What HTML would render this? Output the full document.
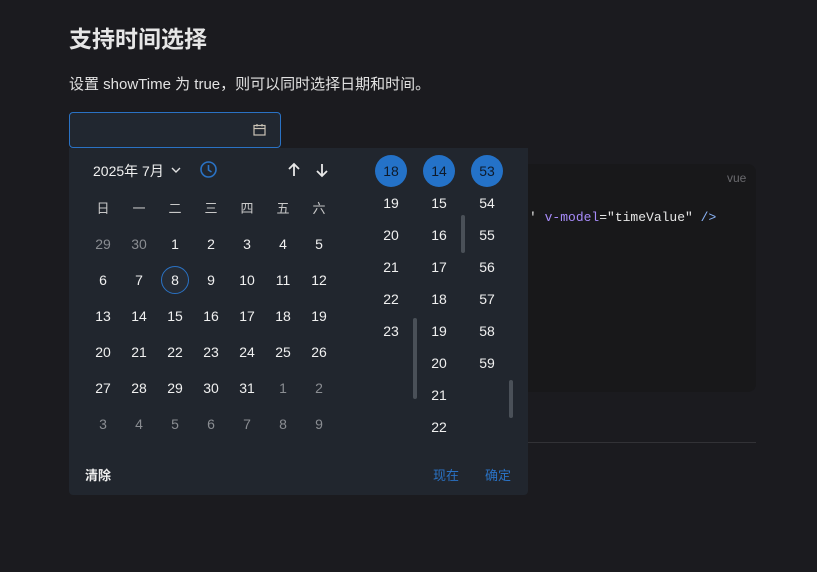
<!DOCTYPE html>
<html><head><meta charset="utf-8"><style>
*{margin:0;padding:0;box-sizing:border-box}
body{width:817px;height:572px;background:#1b1b1f;position:relative;overflow:hidden;font-family:"Liberation Sans","Noto Sans CJK SC",sans-serif;color:#e8e8e8}
.a{position:absolute}
.c{position:absolute;width:30px;height:30px;line-height:30px;text-align:center;font-size:14px;color:#f0f0f0}
.g{color:#8a8d92}
.w{color:#c8c8c8;font-size:13px}
.t{position:absolute;width:32px;height:32px;line-height:32px;text-align:center;font-size:14px;color:#f0f0f0}
.sel{background:#2472c8;border-radius:50%;color:#0e1a2a}
.bar{position:absolute;width:4px;background:#4a5058;border-radius:2px}
</style></head><body>
<div class="a" style="left:69px;top:20px;font-size:23px;font-weight:bold;color:#e6e6e6">支持时间选择</div>
<div class="a" style="left:69px;top:73px;font-size:15px;color:#e2e2e2">设置 showTime 为 true，则可以同时选择日期和时间。</div>
<div class="a" style="left:69px;top:112px;width:212px;height:36px;border:1px solid #2a72c4;border-radius:4px;background:#212730"></div>
<svg class="a" style="left:253px;top:123px" width="13" height="13" viewBox="0 0 13 13" fill="none" stroke="#c9c2b5" stroke-width="1.2"><rect x="1" y="2.5" width="11" height="9.5"/><line x1="1" y1="5.5" x2="12" y2="5.5"/><line x1="4" y1="1" x2="4" y2="3.5"/><line x1="9" y1="1" x2="9" y2="3.5"/></svg>

<div class="a" style="left:528px;top:164px;width:228px;height:228px;background:#18181a;border-radius:0 8px 8px 0"></div>
<div class="a" style="left:727px;top:171px;font-size:12px;color:#6a6a6e">vue</div>
<div class="a" style="left:529px;top:210px;font-family:'Liberation Mono','DejaVu Sans Mono',monospace;font-size:13px;color:#e6e6e6;white-space:pre">' <span style="color:#a78bfa">v-model</span>="timeValue" <span style="color:#8ab4f8">/&gt;</span></div>
<div class="a" style="left:528px;top:442px;width:228px;height:1px;background:#323236"></div>

<div class="a" style="left:69px;top:148px;width:459px;height:347px;background:#21262e;border-radius:0 0 4px 4px"></div>
<div class="a" style="left:93px;top:161px;font-size:14px;color:#f0f0f0">2025年 7月</div>
<svg class="a" style="left:170px;top:164px" width="12" height="12" viewBox="0 0 12 12" fill="none" stroke="#e0e0e0" stroke-width="1.4"><path d="M2 4l4 4 4-4"/></svg>
<svg class="a" style="left:199px;top:160px" width="19" height="19" viewBox="0 0 19 19" fill="none" stroke="#2a72c4" stroke-width="1.6"><circle cx="9.5" cy="9.5" r="7.5"/><path d="M9.5 5v5l3 2"/></svg>
<svg class="a" style="left:286px;top:162px" width="16" height="16" viewBox="0 0 16 16" fill="none" stroke="#e8e8e8" stroke-width="1.8"><path d="M8 14V2M3 7l5-5 5 5"/></svg>
<svg class="a" style="left:314px;top:162px" width="16" height="16" viewBox="0 0 16 16" fill="none" stroke="#e8e8e8" stroke-width="1.8"><path d="M8 2v12M3 9l5 5 5-5"/></svg>

<div class="c w" style="left:88px;top:194px">日</div><div class="c w" style="left:124px;top:194px">一</div><div class="c w" style="left:160px;top:194px">二</div><div class="c w" style="left:196px;top:194px">三</div><div class="c w" style="left:232px;top:194px">四</div><div class="c w" style="left:268px;top:194px">五</div><div class="c w" style="left:304px;top:194px">六</div>

<div class="c g" style="left:88px;top:229px">29</div><div class="c g" style="left:124px;top:229px">30</div><div class="c" style="left:160px;top:229px">1</div><div class="c" style="left:196px;top:229px">2</div><div class="c" style="left:232px;top:229px">3</div><div class="c" style="left:268px;top:229px">4</div><div class="c" style="left:304px;top:229px">5</div>
<div class="c" style="left:88px;top:265px">6</div><div class="c" style="left:124px;top:265px">7</div><div class="c" style="left:161px;top:266px;width:28px;height:28px;line-height:26px;border:1px solid #2a72c4;border-radius:50%;background:#262c35">8</div><div class="c" style="left:196px;top:265px">9</div><div class="c" style="left:232px;top:265px">10</div><div class="c" style="left:268px;top:265px">11</div><div class="c" style="left:304px;top:265px">12</div>
<div class="c" style="left:88px;top:301px">13</div><div class="c" style="left:124px;top:301px">14</div><div class="c" style="left:160px;top:301px">15</div><div class="c" style="left:196px;top:301px">16</div><div class="c" style="left:232px;top:301px">17</div><div class="c" style="left:268px;top:301px">18</div><div class="c" style="left:304px;top:301px">19</div>
<div class="c" style="left:88px;top:337px">20</div><div class="c" style="left:124px;top:337px">21</div><div class="c" style="left:160px;top:337px">22</div><div class="c" style="left:196px;top:337px">23</div><div class="c" style="left:232px;top:337px">24</div><div class="c" style="left:268px;top:337px">25</div><div class="c" style="left:304px;top:337px">26</div>
<div class="c" style="left:88px;top:373px">27</div><div class="c" style="left:124px;top:373px">28</div><div class="c" style="left:160px;top:373px">29</div><div class="c" style="left:196px;top:373px">30</div><div class="c" style="left:232px;top:373px">31</div><div class="c g" style="left:268px;top:373px">1</div><div class="c g" style="left:304px;top:373px">2</div>
<div class="c g" style="left:88px;top:409px">3</div><div class="c g" style="left:124px;top:409px">4</div><div class="c g" style="left:160px;top:409px">5</div><div class="c g" style="left:196px;top:409px">6</div><div class="c g" style="left:232px;top:409px">7</div><div class="c g" style="left:268px;top:409px">8</div><div class="c g" style="left:304px;top:409px">9</div>

<div class="t sel" style="left:375px;top:155px">18</div>
<div class="t" style="left:375px;top:187px">19</div><div class="t" style="left:375px;top:219px">20</div><div class="t" style="left:375px;top:251px">21</div><div class="t" style="left:375px;top:283px">22</div><div class="t" style="left:375px;top:315px">23</div>
<div class="t sel" style="left:423px;top:155px">14</div>
<div class="t" style="left:423px;top:187px">15</div><div class="t" style="left:423px;top:219px">16</div><div class="t" style="left:423px;top:251px">17</div><div class="t" style="left:423px;top:283px">18</div><div class="t" style="left:423px;top:315px">19</div><div class="t" style="left:423px;top:347px">20</div><div class="t" style="left:423px;top:379px">21</div><div class="t" style="left:423px;top:411px">22</div>
<div class="t sel" style="left:471px;top:155px">53</div>
<div class="t" style="left:471px;top:187px">54</div><div class="t" style="left:471px;top:219px">55</div><div class="t" style="left:471px;top:251px">56</div><div class="t" style="left:471px;top:283px">57</div><div class="t" style="left:471px;top:315px">58</div><div class="t" style="left:471px;top:347px">59</div>
<div class="bar" style="left:413px;top:318px;height:81px"></div>
<div class="bar" style="left:461px;top:215px;height:38px"></div>
<div class="bar" style="left:509px;top:380px;height:38px"></div>

<div class="a" style="left:85px;top:465px;font-size:13px;font-weight:bold;color:#f0f0f0">清除</div>
<div class="a" style="left:433px;top:465px;font-size:13px;color:#2a72c4">现在</div>
<div class="a" style="left:485px;top:465px;font-size:13px;color:#2a72c4">确定</div>
</body></html>
